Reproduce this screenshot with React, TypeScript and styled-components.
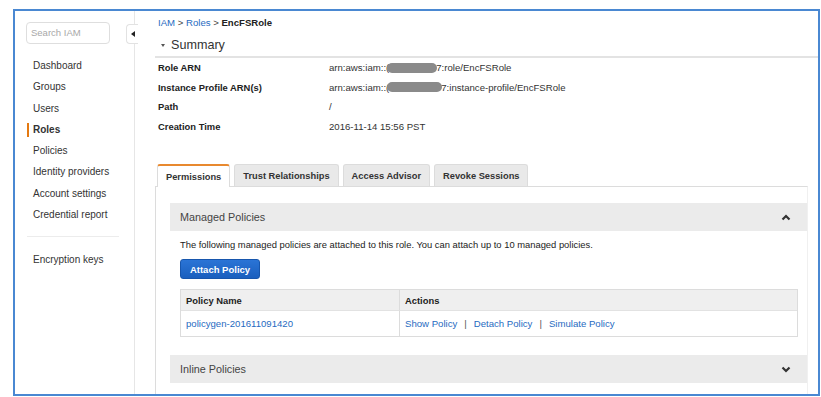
import React from "react";
import styled, { createGlobalStyle } from "styled-components";

const Global = createGlobalStyle`
  html, body { margin: 0; padding: 0; background: #fff; }
  body { font-family: "Liberation Sans", Arial, sans-serif; color: #333; }
`;

const Frame = styled.div`
  position: relative;
  margin: 9px 0 0 13px;
  width: 807px;
  height: 387px;
  box-sizing: border-box;
  border: 2px solid #4a88d2;
  display: flex;
  overflow: hidden;
`;

const Sidebar = styled.nav`
  width: 120px;
  flex: none;
  box-sizing: border-box;
  border-right: 1px solid #e6e6e6;
  padding: 11px 0 0 11px;
  display: flex;
  flex-direction: column;
`;

const Search = styled.div`
  width: 84px;
  height: 22px;
  box-sizing: border-box;
  border: 1px solid #dedede;
  border-radius: 4px;
  font-size: 9.5px;
  color: #a8a8a8;
  line-height: 20px;
  padding-left: 4px;
  margin-bottom: 11px;
`;

const NavItem = styled.div<{ $active?: boolean }>`
  position: relative;
  height: 21.3px;
  line-height: 21.3px;
  padding-left: 7px;
  font-size: 10px;
  color: #333;
  font-weight: ${(p) => (p.$active ? 700 : 400)};
  &::before {
    content: "";
    display: ${(p) => (p.$active ? "block" : "none")};
    position: absolute;
    left: 1px;
    top: 4px;
    width: 2px;
    height: 14px;
    background: #e47911;
  }
`;

const NavDivider = styled.div`
  width: 92px;
  height: 1px;
  background: #ececec;
  margin: 11px 0 12px 1px;
`;

const Toggle = styled.div`
  position: absolute;
  left: 111px;
  top: 13px;
  width: 12px;
  height: 20px;
  box-sizing: border-box;
  background: #fff;
  border: 1px solid #e2e2e2;
  border-right: none;
  border-radius: 4px 0 0 4px;
  display: flex;
  align-items: center;
  justify-content: center;
  &::after {
    content: "";
    border-style: solid;
    border-width: 3px 4px 3px 0;
    border-color: transparent #222 transparent transparent;
    margin-left: 1px;
  }
`;

const Main = styled.main`
  flex: 1;
  padding: 3px 0 0 20px;
  display: flex;
  flex-direction: column;
  min-width: 0;
`;

const Crumbs = styled.div`
  height: 17px;
  line-height: 17px;
  font-size: 9.6px;
  padding-left: 3px;
  color: #444;
`;

const Link = styled.span`
  color: #1f6bc1;
`;

const Strong = styled.span`
  font-weight: 700;
  color: #222;
`;

const SummaryHead = styled.div`
  height: 22px;
  margin-top: 3px;
  border-bottom: 2px solid #e3e3e3;
  display: flex;
  align-items: center;
  gap: 6px;
  padding-left: 6px;
  font-size: 12.6px;
  color: #333;
`;

const Caret = styled.span`
  width: 0;
  height: 0;
  border-style: solid;
  border-width: 3px 2.5px 0 2.5px;
  border-color: #555 transparent transparent transparent;
`;

const Details = styled.div`
  display: grid;
  grid-template-columns: 171px 1fr;
  grid-auto-rows: 19.5px;
  align-items: center;
  padding: 0 0 0 3px;
  font-size: 9.6px;
`;

const Label = styled.div`
  font-weight: 700;
  color: #222;
  font-size: 9.4px;
`;

const Value = styled.div`
  color: #333;
  display: flex;
  align-items: center;
`;

const Redact = styled.span<{ $w: number }>`
  display: inline-block;
  width: ${(p) => p.$w}px;
  height: 10px;
  border-radius: 5px;
  background: #8a8a8a;
  margin: 0 -1px 0 -2px;
`;

const Tabs = styled.div`
  margin-top: 28px;
  display: flex;
  gap: 4px;
  padding-left: 2px;
  height: 22px;
  position: relative;
  z-index: 1;
`;

const Tab = styled.div<{ $active?: boolean }>`
  box-sizing: border-box;
  height: ${(p) => (p.$active ? 23 : 22)}px;
  padding: 0 8px;
  display: flex;
  align-items: center;
  font-size: 9.3px;
  font-weight: 700;
  color: #333;
  background: ${(p) => (p.$active ? "#fff" : "#e9e9e9")};
  border: 1px solid #dcdcdc;
  border-bottom: none;
  border-top: ${(p) => (p.$active ? "2px solid #e8892f" : "1px solid #dcdcdc")};
  border-radius: 3px 3px 0 0;
`;

const Panel = styled.section`
  flex: 1;
  box-sizing: border-box;
  border-top: 1px solid #dcdcdc;
  border-left: 1px solid #dcdcdc;
  margin-right: 10px;
  border-right: 1px solid #f0f0f0;
  padding: 16px 0 0 14px;
  display: flex;
  flex-direction: column;
`;

const SectionHead = styled.div`
  height: 28px;
  flex: none;
  background: #ebebeb;
  display: flex;
  align-items: center;
  justify-content: space-between;
  padding: 0 16px 0 10px;
  font-size: 10.8px;
  color: #444;
`;

const SectionBody = styled.div`
  padding: 8px 11px 18px 10px;
  display: flex;
  flex-direction: column;
  align-items: flex-start;
`;

const Note = styled.div`
  font-size: 9.4px;
  color: #222;
  line-height: 12px;
`;

const Button = styled.div`
  margin-top: 8px;
  width: 80px;
  height: 20px;
  box-sizing: border-box;
  border-radius: 3px;
  background: linear-gradient(#2a74d6, #1a5fbe);
  border: 1px solid #1756ad;
  color: #fff;
  font-size: 9.5px;
  font-weight: 700;
  display: flex;
  align-items: center;
  justify-content: center;
`;

const Table = styled.div`
  margin-top: 10px;
  width: 618px;
  box-sizing: border-box;
  border: 1px solid #dcdcdc;
  display: grid;
  grid-template-columns: 218px 1fr;
  font-size: 9.6px;
`;

const Th = styled.div<{ $first?: boolean }>`
  height: 20px;
  background: #efefef;
  font-weight: 700;
  color: #222;
  font-size: 9.4px;
  display: flex;
  align-items: center;
  padding-left: 5px;
  border-bottom: 1px solid #e2e2e2;
  border-left: ${(p) => (p.$first ? "none" : "1px solid #dcdcdc")};
`;

const Td = styled.div<{ $first?: boolean }>`
  height: 25px;
  display: flex;
  align-items: center;
  padding-left: 5px;
  border-left: ${(p) => (p.$first ? "none" : "1px solid #dcdcdc")};
  color: #1f6bc1;
`;

const Sep = styled.span`
  color: #555;
  margin: 0 7px;
`;

const Chevron = ({ up }: { up?: boolean }) => (
  <svg width="10" height="7" viewBox="0 0 10 7">
    <polyline
      points={up ? "1.5,5.5 5,2 8.5,5.5" : "1.5,1.5 5,5 8.5,1.5"}
      fill="none"
      stroke="#333"
      strokeWidth="2.2"
    />
  </svg>
);

const nav = [
  "Dashboard",
  "Groups",
  "Users",
  "Roles",
  "Policies",
  "Identity providers",
  "Account settings",
  "Credential report",
];

export default function App() {
  return (
    <>
      <Global />
      <Frame>
        <Sidebar>
          <Search>Search IAM</Search>
          {nav.map((n) => (
            <NavItem key={n} $active={n === "Roles"}>
              {n}
            </NavItem>
          ))}
          <NavDivider />
          <NavItem>Encryption keys</NavItem>
        </Sidebar>
        <Toggle />
        <Main>
          <Crumbs>
            <Link>IAM</Link> &gt; <Link>Roles</Link> &gt; <Strong>EncFSRole</Strong>
          </Crumbs>
          <SummaryHead>
            <Caret />
            Summary
          </SummaryHead>
          <Details>
            <Label>Role ARN</Label>
            <Value>
              arn:aws:iam::(<Redact $w={50} />7:role/EncFSRole
            </Value>
            <Label>Instance Profile ARN(s)</Label>
            <Value>
              arn:aws:iam::(<Redact $w={55} />7:instance-profile/EncFSRole
            </Value>
            <Label>Path</Label>
            <Value>/</Value>
            <Label>Creation Time</Label>
            <Value>2016-11-14 15:56 PST</Value>
          </Details>
          <Tabs>
            <Tab $active>Permissions</Tab>
            <Tab>Trust Relationships</Tab>
            <Tab>Access Advisor</Tab>
            <Tab>Revoke Sessions</Tab>
          </Tabs>
          <Panel>
            <SectionHead>
              Managed Policies
              <Chevron up />
            </SectionHead>
            <SectionBody>
              <Note>
                The following managed policies are attached to this role. You can attach up to 10
                managed policies.
              </Note>
              <Button>Attach Policy</Button>
              <Table>
                <Th $first>Policy Name</Th>
                <Th>Actions</Th>
                <Td $first>policygen-201611091420</Td>
                <Td>
                  Show Policy<Sep>|</Sep>Detach Policy<Sep>|</Sep>Simulate Policy
                </Td>
              </Table>
            </SectionBody>
            <SectionHead>
              Inline Policies
              <Chevron />
            </SectionHead>
          </Panel>
        </Main>
      </Frame>
    </>
  );
}
